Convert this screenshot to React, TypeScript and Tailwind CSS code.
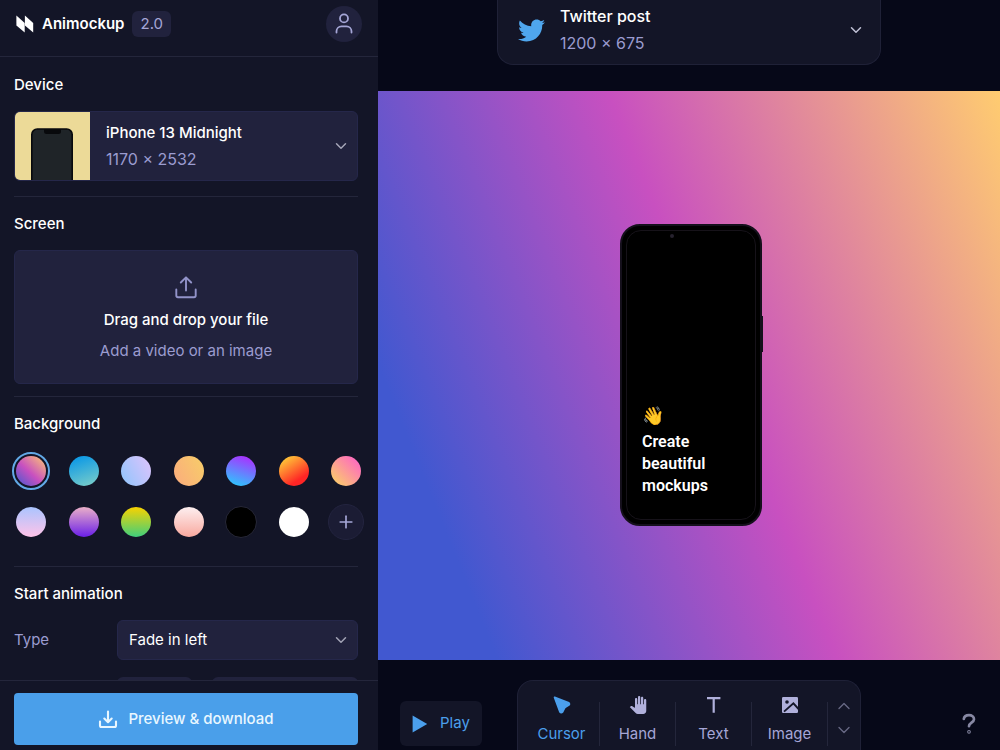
import type { ReactNode } from 'react';
import { ChevronDown, ChevronUp, Plus } from 'lucide-react';
import { FaTwitter } from 'react-icons/fa6';
import { MdPanTool } from 'react-icons/md';

const swatches = [
  { name: 'Twilight', fill: 'bg-[linear-gradient(43deg,#4158d0_0%,#c850c0_46%,#ffcc70_100%)]' },
  { name: 'Lagoon', fill: 'bg-[linear-gradient(160deg,#0093e9_0%,#80d0c7_100%)]' },
  { name: 'Periwinkle', fill: 'bg-[linear-gradient(62deg,#8ec5fc_0%,#e0c3fc_100%)]' },
  { name: 'Honey', fill: 'bg-[linear-gradient(62deg,#fbab7e_0%,#f7ce68_100%)]' },
  { name: 'Electric', fill: 'bg-[linear-gradient(19deg,#21d4fd_0%,#b721ff_100%)]' },
  { name: 'Ember', fill: 'bg-[linear-gradient(147deg,#ffe53b_0%,#ff2525_74%)]' },
  { name: 'Sorbet', fill: 'bg-[linear-gradient(45deg,#fad961_0%,#ff5acd_100%)]' },
  { name: 'Cotton candy', fill: 'bg-[linear-gradient(0deg,#ffc3e8_0%,#aac4ff_100%)]' },
  { name: 'Orchid', fill: 'bg-[linear-gradient(180deg,#eaafc8_0%,#6a1fe8_100%)]' },
  { name: 'Lime', fill: 'bg-[linear-gradient(180deg,#f9d200_0%,#3fcf7c_100%)]' },
  { name: 'Blush', fill: 'bg-[linear-gradient(180deg,#fdeff0_0%,#f9a99f_100%)]' },
  { name: 'Black', fill: 'bg-black' },
  { name: 'White', fill: 'bg-white' },
];

function Logo() {
  return (
    <svg viewBox="0 0 18 18" className="size-[18px]" fill="#fff" aria-hidden="true">
      <path d="M0.4 0.4 L8.7 8 V17.6 L0.4 10.4 Z" />
      <path d="M8.9 0.4 L17.2 8 V17.6 L8.9 10.4 Z" />
    </svg>
  );
}

function UserIcon() {
  return (
    <svg viewBox="0 0 24 24" className="size-6" fill="none" stroke="#a5a6d6" strokeWidth="1.8" strokeLinecap="round" aria-hidden="true">
      <circle cx="12" cy="6.4" r="4" />
      <path d="M4.5 20.5v-1.2a5 5 0 0 1 5-5h5a5 5 0 0 1 5 5v1.2" />
    </svg>
  );
}

function UploadIcon() {
  return (
    <svg viewBox="0 0 24 24" className="size-6" fill="none" stroke="#9293c9" strokeWidth="1.9" strokeLinecap="round" strokeLinejoin="round" aria-hidden="true">
      <path d="M12 15.5V2.5M6.8 7.5L12 2.3l5.2 5.2" />
      <path d="M2.3 14.5v6a1.7 1.7 0 0 0 1.7 1.7h16a1.7 1.7 0 0 0 1.7-1.7v-6" />
    </svg>
  );
}

function DownloadIcon() {
  return (
    <svg viewBox="0 0 20 20" className="size-5" fill="none" stroke="#e9f7ff" strokeWidth="2.1" strokeLinecap="round" strokeLinejoin="round" aria-hidden="true">
      <path d="M10 2.5v10.5M6.3 9.6L10 13.2l3.7-3.6" />
      <path d="M2 12.5v4A1.5 1.5 0 0 0 3.5 18h13a1.5 1.5 0 0 0 1.5-1.5v-4" />
    </svg>
  );
}

function CursorIcon() {
  return (
    <svg viewBox="0 0 18 18" className="size-[18px]" fill="#4b9fec" stroke="#4b9fec" strokeWidth="1.8" strokeLinejoin="round" aria-hidden="true">
      <path d="M1.6 1.4 L15.8 6.8 Q17 8 15.8 9 L12.6 11 Q11.6 11.6 11.2 12.6 L9.6 15.8 Q8.2 17.2 7 15.9 Z" />
    </svg>
  );
}

function TextIcon() {
  return (
    <svg viewBox="0 0 18 18" className="size-[18px]" fill="none" stroke="#b0b0db" strokeWidth="2.2" aria-hidden="true">
      <path d="M2 2.2h13.4M8.7 2.2v14.6" />
    </svg>
  );
}

function ImageIcon() {
  return (
    <svg viewBox="0 0 18 18" className="size-[18px]" aria-hidden="true">
      <rect x="1" y="1" width="16" height="16" rx="1.2" fill="#b0b0db" />
      <circle cx="6" cy="6" r="1.8" fill="#141629" />
      <path d="M3 15.6L12.4 7.4 17.6 13" fill="none" stroke="#141629" strokeWidth="1.9" />
    </svg>
  );
}

function DeviceThumb() {
  return (
    <svg viewBox="0 0 75 68" className="h-[68px] w-[75px]" aria-hidden="true">
      <rect width="75" height="68" fill="#ecda98" />
      <path d="M16.8 70V22.5a5.5 5.5 0 0 1 5.5-5.5h29.4a5.5 5.5 0 0 1 5.5 5.5V70z" fill="#1f2428" stroke="#08090c" strokeWidth="1.6" />
      <path d="M29 17h17v2.5a2.5 2.5 0 0 1-2.5 2.5h-12A2.5 2.5 0 0 1 29 19.5z" fill="#08090c" />
    </svg>
  );
}

function Section({ title, children, last = false }: { title: string; children: ReactNode; last?: boolean }) {
  return (
    <section className={last ? 'pt-[17px]' : 'border-b border-[#24263b] pt-[17px]'}>
      <h2 className="text-[15px] leading-5 font-medium text-white">{title}</h2>
      {children}
    </section>
  );
}

function Sidebar() {
  return (
    <aside className="flex w-[378px] shrink-0 flex-col bg-[#131527]">
      <header className="flex items-center border-b border-[#24263b] pt-[5px] pr-4 pb-[13px] pl-4">
        <Logo />
        <span className="ml-2 text-[15px] leading-6 font-semibold text-white">Animockup</span>
        <span className="ml-2 rounded-md bg-[#21223d] px-2 py-px text-[15px] leading-6 text-[#a5a6d6]">2.0</span>
        <button aria-label="Account" className="my-px ml-auto flex size-9 items-center justify-center rounded-full bg-[#21223d]">
          <UserIcon />
        </button>
      </header>

      <div className="min-h-0 flex-1 overflow-hidden pt-px pr-5 pl-[14px]">
        <Section title="Device">
          <button className="mt-4 mb-[15px] flex w-full items-center overflow-hidden rounded-md border border-[#25274a] bg-[#21223d] text-left">
            <DeviceThumb />
            <span className="ml-4 flex-1 text-base leading-[27px]">
              <span className="block text-[15px] leading-[27px] font-medium text-white">iPhone 13 Midnight</span>
              <span className="block text-[#9b9cd0]">1170 × 2532</span>
            </span>
            <ChevronDown className="mr-[7px] size-[18px] text-[#a3a4b6]" />
          </button>
        </Section>

        <Section title="Screen">
          <button className="mt-4 mb-3 flex w-full flex-col items-center rounded-md border border-[#25274a] bg-[#21223d] pt-6 pb-4 text-[15px]">
            <UploadIcon />
            <span className="mt-[9px] leading-6 font-medium text-white">Drag and drop your file</span>
            <span className="mt-[7px] mb-1 leading-6 text-[#9b9cd0]">Add a video or an image</span>
          </button>
        </Section>

        <Section title="Background">
          <div className="mt-[19px] -mr-1.5 mb-[26px] -ml-px grid grid-cols-[repeat(7,36px)] justify-between gap-y-[15px]">
            {swatches.map((s, i) => (
              <button
                key={s.name}
                aria-label={s.name}
                className={
                  i === 0
                    ? '-m-px flex size-[38px] items-center justify-center rounded-full border-2 border-[#62a9e6]'
                    : '-m-px flex size-[38px] items-center justify-center rounded-full'
                }
              >
                <span
                  className={
                    s.name === 'Black'
                      ? 'size-8 rounded-full border border-[#262738] bg-black'
                      : `size-[30px] rounded-full ${s.fill}`
                  }
                />
              </button>
            ))}
            <button aria-label="Add background" className="flex size-9 items-center justify-center rounded-full border border-[#23243f] bg-[#1b1c34]">
              <Plus className="size-5 text-[#a5a6d6]" strokeWidth={2} />
            </button>
          </div>
        </Section>

        <Section title="Start animation" last>
          <div className="mt-4 flex items-center">
            <label htmlFor="type" className="w-[103px] text-[15px] leading-6 text-[#9b9cd0]">
              Type
            </label>
            <div className="relative flex-1">
              <select id="type" className="h-10 w-full appearance-none rounded-md border border-[#25274a] bg-[#21223d] px-[11px] text-[15px] text-white">
                <option>Fade in left</option>
              </select>
              <ChevronDown className="pointer-events-none absolute top-[11px] right-2 size-[18px] text-[#a3a4b6]" />
            </div>
          </div>
          <div className="mt-[17px] flex gap-5 pl-[103px]">
            <div className="h-10 w-[75px] rounded-md bg-[#21223d]" />
            <div className="h-10 flex-1 rounded-md bg-[#21223d]" />
          </div>
        </Section>
      </div>

      <footer className="border-t border-[#24263b] pt-3 pr-5 pb-[5px] pl-[14px]">
        <button className="flex h-[52px] w-full items-center justify-center gap-[10px] rounded bg-[#4a9fea] text-[15px] font-medium text-[#e9f7ff]">
          <DownloadIcon />
          Preview &amp; download
        </button>
      </footer>
    </aside>
  );
}

function Phone() {
  return (
    <div className="relative flex h-[302px] w-[142px] flex-col justify-end rounded-[20px] border-2 border-[#15101c] bg-black pb-[27px] pl-5">
      <div className="absolute inset-x-1 inset-y-1 rounded-[15px] border border-[#161219]" />
      <div className="absolute top-2 left-12 size-1 rounded-full bg-[#26222e]" />
      <div className="absolute top-[90px] -right-[3px] h-9 w-px bg-[#15101c]" />
      <p className="font-['Roboto',sans-serif] text-base leading-[22px] font-semibold text-white">
        <span className="mb-1 block text-lg leading-[22px]">👋</span>
        Create
        <br />
        beautiful
        <br />
        mockups
      </p>
    </div>
  );
}

function Tool({ icon, label, active = false }: { icon: ReactNode; label: string; active?: boolean }) {
  return (
    <button
      className={
        active
          ? 'flex w-[75px] flex-col items-center gap-[10px] text-[15px] leading-5 text-[#4b9fec]'
          : 'flex w-[75px] flex-col items-center gap-[10px] text-[15px] leading-5 text-[#a5a6d6]'
      }
    >
      {icon}
      {label}
    </button>
  );
}

function Divider() {
  return <span className="mt-1.5 mb-1 w-px self-stretch bg-[#24263b]" />;
}

function Workspace() {
  return (
    <main className="flex min-w-0 flex-1 flex-col bg-[#060818]">
      <div className="flex justify-center pb-[26px]">
        <button className="flex h-[65px] w-[384px] items-center rounded-b-2xl border border-t-0 border-[#1f2137] bg-[#131527] pr-[15px] pb-1 pl-5 text-left">
          <FaTwitter className="size-[27px] text-[#4fa6ee]" />
          <span className="ml-[15px] flex-1 text-base leading-[27px]">
            <span className="block font-medium text-white">Twitter post</span>
            <span className="block text-[#9b9cd0]">1200 × 675</span>
          </span>
          <ChevronDown className="size-[18px] text-[#c0c1d6]" />
        </button>
      </div>

      <div className="flex min-h-0 flex-1 items-center justify-center bg-[linear-gradient(68deg,#4158d0_14%,#c850c0_54%,#ffcc70_100%)] pb-px pl-1">
        <Phone />
      </div>

      <div className="grid h-[90px] grid-cols-[1fr_auto_1fr] items-end">
        <div className="pb-1 pl-[22px]">
          <button className="flex h-[45px] items-center gap-3 rounded-md bg-[#131527] px-3 text-[15px] text-[#4b9fec]">
            <svg viewBox="0 0 16 18" className="h-[18px] w-4" fill="#4b9fec" aria-hidden="true">
              <path d="M0.6 0.6L15.2 9 0.6 17.4z" />
            </svg>
            Play
          </button>
        </div>
        <div className="flex h-[70px] rounded-t-2xl border border-b-0 border-[#1f2137] bg-[#131527] pt-[15px] pl-1.5">
          <Tool active label="Cursor" icon={<CursorIcon />} />
          <Divider />
          <Tool label="Hand" icon={<MdPanTool className="size-[18px] text-[#b0b0db]" />} />
          <Divider />
          <Tool label="Text" icon={<TextIcon />} />
          <Divider />
          <Tool label="Image" icon={<ImageIcon />} />
          <Divider />
          <div className="flex w-8 flex-col items-center gap-1 text-[#686985]">
            <button aria-label="Previous tools">
              <ChevronUp className="size-5" strokeWidth={1.6} />
            </button>
            <button aria-label="More tools">
              <ChevronDown className="size-5" strokeWidth={1.6} />
            </button>
          </div>
        </div>
        <div className="flex justify-end pr-6 pb-[15px]">
          <button aria-label="Help">
            <svg viewBox="0 0 14 22" className="h-[22px] w-[14px]" fill="none" stroke="#8788a3" strokeWidth="2.7" strokeLinecap="round" strokeLinejoin="round" aria-hidden="true">
              <path d="M1.8 6C2.2 3.4 4.2 2.2 7 2.2s5 1.6 5 4.1c0 3.2-5 3.6-5 6.9" />
              <circle cx="7" cy="18.8" r="0.5" />
            </svg>
          </button>
        </div>
      </div>
    </main>
  );
}

export default function App() {
  return (
    <div className="flex h-screen overflow-hidden bg-[#060818] font-['Inter',sans-serif]">
      <Sidebar />
      <Workspace />
    </div>
  );
}
